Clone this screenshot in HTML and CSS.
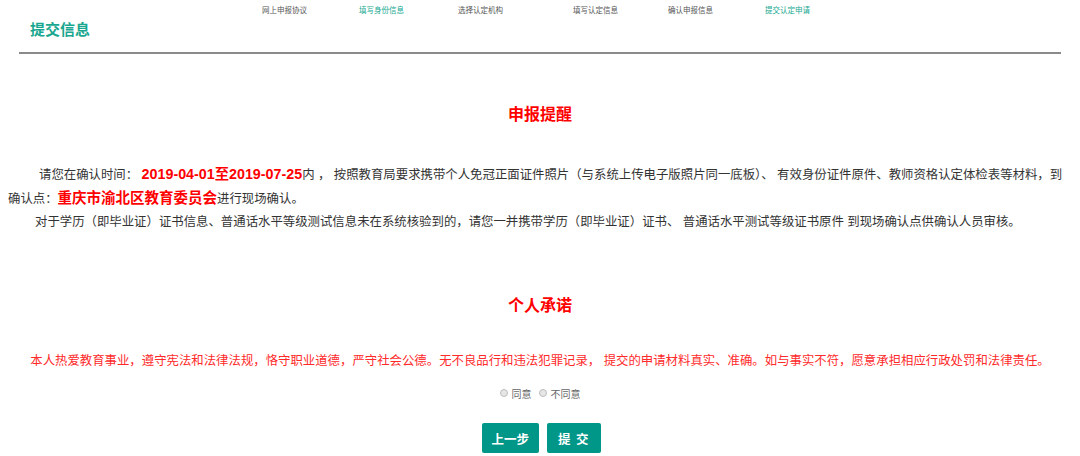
FILE: index.html
```html
<!DOCTYPE html>
<html lang="zh-CN">
<head>
<meta charset="utf-8">
<title>提交信息</title>
<link rel="stylesheet" href="styles.css">
</head>
<body>
<header class="page-head">
  <nav class="steps">
    <span class="step">网上申报协议</span>
    <span class="step step-on">填写身份信息</span>
    <span class="step">选择认定机构</span>
    <span class="step">填写认定信息</span>
    <span class="step">确认申报信息</span>
    <span class="step step-on">提交认定申请</span>
  </nav>
  <h1 class="page-title">提交信息</h1>
</header>

<main class="content">
  <h2 class="notice-title">申报提醒</h2>
  <p class="notice notice-first">请您在确认时间： <b class="hl hl-date">2019-04-01至2019-07-25</b>内 ， 按照教育局要求携带个人免冠正面证件照片（与系统上传电子版照片同一底板）、 有效身份证件原件、教师资格认定体检表等材料，到确认点：<b class="hl hl-big">重庆市渝北区教育委员会</b>进行现场确认。</p>
  <p class="notice notice-second">对于学历（即毕业证）证书信息、普通话水平等级测试信息未在系统核验到的，请您一并携带学历（即毕业证）证书、 普通话水平测试等级证书原件 到现场确认点供确认人员审核。</p>

  <h2 class="notice-title promise-title">个人承诺</h2>
  <p class="promise">本人热爱教育事业，遵守宪法和法律法规，恪守职业道德，严守社会公德。无不良品行和违法犯罪记录， 提交的申请材料真实、准确。如与事实不符，愿意承担相应行政处罚和法律责任。</p>

  <form class="agree">
    <label class="choice"><input type="radio" name="agree" class="radio"> 同意</label>
    <label class="choice"><input type="radio" name="agree" class="radio"> 不同意</label>
  </form>

  <div class="actions">
    <button type="button" class="btn">上一步</button>
    <button type="button" class="btn btn-spaced">提 交</button>
  </div>
</main>
</body>
</html>
```

FILE: styles.css
```css
* {
  box-sizing: border-box;
}

html, body {
  margin: 0;
  padding: 0;
  background: #ffffff;
}

body {
  font-family: "Liberation Sans", "Noto Sans CJK SC", sans-serif;
  color: #333333;
  width: 1080px;
  height: 456px;
  overflow: hidden;
}

/* ---- header: step bar, title, divider ---- */
.page-head {
  margin: 0 19px;
  height: 54px;
  border-bottom: 2px solid #8a8a8a;
}

.steps {
  display: grid;
  grid-template-columns: 97px 99px 115px 95px 97px auto;
  padding-left: 243px;
  height: 18px;
  align-items: center;
}

.step {
  font-size: 7.5px;
  color: #555555;
  white-space: nowrap;
}

.step-on {
  color: #14a88f;
}

.page-title {
  margin: 0 0 0 11px;
  font-size: 15px;
  line-height: 23px;
  font-weight: bold;
  color: #1aa790;
}

/* ---- body text ---- */
.content {
  padding: 0 8px;
}

.notice-title {
  margin: 49px 0 0;
  text-align: center;
  font-size: 16px;
  line-height: 24px;
  font-weight: bold;
  color: #ff0000;
}

.notice {
  margin: 0;
  font-size: 12.4px;
  line-height: 23px;
  color: #333333;
}

.notice-first {
  margin-top: 36px;
  text-indent: 31px;
}

.notice-second {
  text-indent: 27px;
}

.hl {
  color: #ff0000;
  font-weight: bold;
}

.hl-date {
  font-size: 14.3px;
}

.hl-big {
  font-size: 14.5px;
}

.promise-title {
  margin-top: 60px;
}

.promise {
  margin: 32px 0 0;
  text-align: center;
  font-size: 12.4px;
  line-height: 23px;
  color: #ff2a2a;
}

/* ---- agreement radios ---- */
.agree {
  margin: 12px 0 0;
  display: flex;
  justify-content: center;
  gap: 7px;
  height: 16px;
  align-items: center;
}

.choice {
  display: flex;
  align-items: center;
  gap: 4px;
  font-size: 10px;
  color: #666666;
}

.radio {
  appearance: none;
  -webkit-appearance: none;
  margin: 0;
  width: 8px;
  height: 8px;
  border: 1px solid #bdbdbd;
  border-radius: 50%;
  background: #e6e6e6;
}

/* ---- buttons ---- */
.actions {
  margin-top: 22px;
  display: flex;
  justify-content: center;
  gap: 8px;
  padding-left: 2px;
}

.btn {
  height: 30px;
  padding: 0 10px;
  border: none;
  border-radius: 2px;
  background: #009688;
  color: #ffffff;
  font-family: "Liberation Sans", "Noto Sans CJK SC", sans-serif;
  font-size: 12.5px;
  font-weight: bold;
  cursor: pointer;
}

.btn-spaced {
  padding: 0 11px;
  letter-spacing: 1px;
}
```
